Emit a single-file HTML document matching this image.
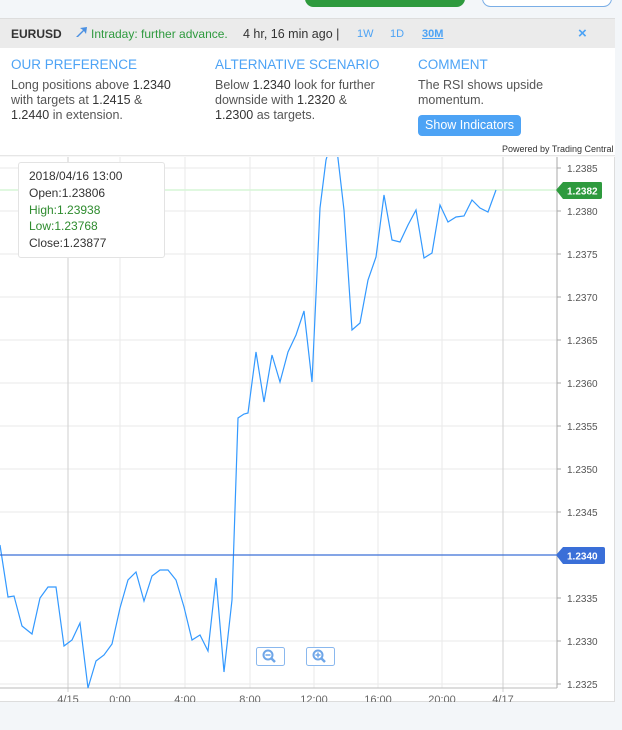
<!DOCTYPE html>
<html><head><meta charset="utf-8"><style>
*{margin:0;padding:0;box-sizing:border-box}
body{width:622px;height:730px;background:#f3f6f9;font-family:"Liberation Sans",sans-serif;position:relative;overflow:hidden}
.abs{position:absolute}
.hdr{left:0;top:18px;width:615px;height:30px;background:#ebebeb;border-top:1px solid #ddd;font-size:12px;line-height:30px}
.body{left:0;top:48px;width:615px;height:107px;background:#fff}
h3{font-size:13.5px;color:#4da3f5;font-weight:normal;position:absolute;top:9px}
.t{position:absolute;top:30px;font-size:12.5px;line-height:15px;color:#555}
.t b{color:#333;font-weight:normal}
.chart{left:0;top:155px;width:615px;height:547px;background:#fff;border-right:1px solid #ddd;border-bottom:1px solid #ddd}
</style></head><body>
<div class="abs" style="left:305px;top:-10px;width:160px;height:17px;background:#2e9a3e;border-radius:9px"></div>
<div class="abs" style="left:482px;top:-10px;width:130px;height:17px;border:1px solid #7aaee6;border-radius:9px;background:#fff"></div>

<div class="abs hdr">
<span class="abs" style="left:11px;font-weight:bold;color:#333">EURUSD</span>
<svg class="abs" style="left:74px;top:6px" width="14" height="14"><path d="M2 12 L9 5 L6 3 L13 2 L12 9 L10 6 L4 12 Z" fill="#4a90e2"/></svg>
<span class="abs" style="left:91px;color:#2e9a3e">Intraday: further advance.</span>
<span class="abs" style="left:243px;color:#333;font-size:12.5px">4 hr, 16 min ago |</span>
<span class="abs" style="left:357px;color:#4da3f5;font-size:11px">1W</span>
<span class="abs" style="left:390px;color:#4da3f5;font-size:11px">1D</span>
<span class="abs" style="left:422px;color:#4da3f5;font-size:11px;font-weight:bold;text-decoration:underline">30M</span>
<span class="abs" style="left:578px;color:#4da3f5;font-size:15px;font-weight:bold">×</span>
</div>
<div class="abs body">
<h3 style="left:11px">OUR PREFERENCE</h3>
<div class="t" style="left:11px">Long positions above <b>1.2340</b><br>with targets at <b>1.2415</b> &amp;<br><b>1.2440</b> in extension.</div>
<h3 style="left:215px">ALTERNATIVE SCENARIO</h3>
<div class="t" style="left:215px">Below <b>1.2340</b> look for further<br>downside with <b>1.2320</b> &amp;<br><b>1.2300</b> as targets.</div>
<h3 style="left:418px">COMMENT</h3>
<div class="t" style="left:418px">The RSI shows upside<br>momentum.</div>
<div class="abs" style="left:418px;top:67px;width:103px;height:21px;background:#4da3f5;border-radius:4px;color:#fff;font-size:12.5px;line-height:21px;text-align:center">Show Indicators</div>
<div class="abs" style="left:502px;top:96px;font-size:9px;color:#333">Powered by Trading Central</div>
</div>

<div class="abs chart">
<svg width="615" height="547" style="position:absolute;left:0;top:0">
<g transform="translate(0,-155)" font-family="Liberation Sans" font-size="10" fill="#555">
<g stroke="#eaeaea">
<line x1="0" x2="557" y1="168" y2="168"/><line x1="0" x2="557" y1="211" y2="211"/><line x1="0" x2="557" y1="254" y2="254"/><line x1="0" x2="557" y1="297" y2="297"/><line x1="0" x2="557" y1="340" y2="340"/><line x1="0" x2="557" y1="383" y2="383"/><line x1="0" x2="557" y1="426" y2="426"/><line x1="0" x2="557" y1="469" y2="469"/><line x1="0" x2="557" y1="512" y2="512"/><line x1="0" x2="557" y1="598" y2="598"/><line x1="0" x2="557" y1="641" y2="641"/><line x1="0" x2="557" y1="684" y2="684"/>
<line x1="120" x2="120" y1="155" y2="688"/><line x1="185" x2="185" y1="155" y2="688"/><line x1="250" x2="250" y1="155" y2="688"/><line x1="314" x2="314" y1="155" y2="688"/><line x1="378" x2="378" y1="155" y2="688"/><line x1="442" x2="442" y1="155" y2="688"/>
</g>
<g stroke="#cfcfcf"><line x1="68" x2="68" y1="155" y2="692"/><line x1="503" x2="503" y1="155" y2="692"/></g>
<line x1="0" x2="557" y1="688" y2="688" stroke="#bbb"/>
<line x1="557" x2="557" y1="155" y2="688" stroke="#aaa"/>
<line x1="0" x2="557" y1="190" y2="190" stroke="#d6f5d6" stroke-width="1.5"/>
<polyline fill="none" stroke="#3399ff" stroke-width="1.2" points="0,545 8,597 14,596 22,626 32,634 40,598 48,587 56,587 64,646 72,640 80,623 88,688 96,661 104,655 112,644 120,608 128,580 136,572 144,601 152,576 160,570 168,570 176,580 184,607 192,640 200,635 208,651 216,578 224,672 232,600 238,418 244,414 248,413 256,352 264,402 272,355 280,382 288,352 296,335 304,311 312,382 320,208 326,160 332,140 337,150 344,210 352,330 360,323 368,280 376,257 384,195 392,240 400,242 408,225 416,210 424,258 432,253 440,205 448,222 456,217 464,216 472,200 480,208 488,212 496,190"/>
<line x1="0" x2="557" y1="555" y2="555" stroke="#3a6fd8" stroke-width="1.2"/>
<g>
<text x="567" y="172">1.2385</text><text x="567" y="215">1.2380</text><text x="567" y="258">1.2375</text><text x="567" y="301">1.2370</text><text x="567" y="344">1.2365</text><text x="567" y="387">1.2360</text><text x="567" y="430">1.2355</text><text x="567" y="473">1.2350</text><text x="567" y="516">1.2345</text><text x="567" y="602">1.2335</text><text x="567" y="645">1.2330</text><text x="567" y="688">1.2325</text>
</g>
<g stroke="#aaa">
<line x1="557" x2="561" y1="168" y2="168"/><line x1="557" x2="561" y1="211" y2="211"/><line x1="557" x2="561" y1="254" y2="254"/><line x1="557" x2="561" y1="297" y2="297"/><line x1="557" x2="561" y1="340" y2="340"/><line x1="557" x2="561" y1="383" y2="383"/><line x1="557" x2="561" y1="426" y2="426"/><line x1="557" x2="561" y1="469" y2="469"/><line x1="557" x2="561" y1="512" y2="512"/><line x1="557" x2="561" y1="598" y2="598"/><line x1="557" x2="561" y1="641" y2="641"/><line x1="557" x2="561" y1="684" y2="684"/>
</g>
<path d="M556 190 L563 182 L601 182 Q602 182 602 184 L602 197 Q602 199 600 199 L563 199 Z" fill="#2e9a3e"/>
<text x="567" y="194.5" fill="#fff" font-weight="bold">1.2382</text>
<path d="M556 555 L563 547 L603 547 Q605 547 605 549 L605 562 Q605 564 603 564 L563 564 Z" fill="#3a6fd8"/>
<text x="567" y="559.5" fill="#fff" font-weight="bold">1.2340</text>
<g font-size="11" fill="#666" text-anchor="middle">
<text x="68" y="703">4/15</text><text x="120" y="703">0:00</text><text x="185" y="703">4:00</text><text x="250" y="703">8:00</text><text x="314" y="703">12:00</text><text x="378" y="703">16:00</text><text x="442" y="703">20:00</text><text x="503" y="703">4/17</text>
</g>
<rect x="256.5" y="647.5" width="28" height="18" rx="2" fill="#fff" stroke="#8ab8ee"/>
<circle cx="268" cy="655" r="4.5" fill="none" stroke="#6fa6e8" stroke-width="2"/><line x1="271" y1="658" x2="275" y2="662" stroke="#6fa6e8" stroke-width="2.5"/><line x1="265.5" y1="655" x2="270.5" y2="655" stroke="#6fa6e8" stroke-width="1.5"/>
<rect x="306.5" y="647.5" width="28" height="18" rx="2" fill="#fff" stroke="#8ab8ee"/>
<circle cx="318" cy="655" r="4.5" fill="none" stroke="#6fa6e8" stroke-width="2"/><line x1="321" y1="658" x2="325" y2="662" stroke="#6fa6e8" stroke-width="2.5"/><line x1="315.5" y1="655" x2="320.5" y2="655" stroke="#6fa6e8" stroke-width="1.5"/><line x1="318" y1="652.5" x2="318" y2="657.5" stroke="#6fa6e8" stroke-width="1.5"/>
</g>
</svg>
<div class="abs" style="left:18px;top:7px;width:147px;height:96px;background:#fff;border:1px solid #e3e3e3;border-radius:3px;font-size:12px;line-height:16.8px;color:#333;padding:5px 0 0 10px">2018/04/16 13:00<br>Open:1.23806<br><span style="color:#2e8b2e">High:1.23938</span><br><span style="color:#2e8b2e">Low:1.23768</span><br>Close:1.23877</div>
</div>
<div class="abs" style="left:0;top:155px;width:615px;height:2px;background:linear-gradient(#ddd,#fff)"></div>
</body></html>
